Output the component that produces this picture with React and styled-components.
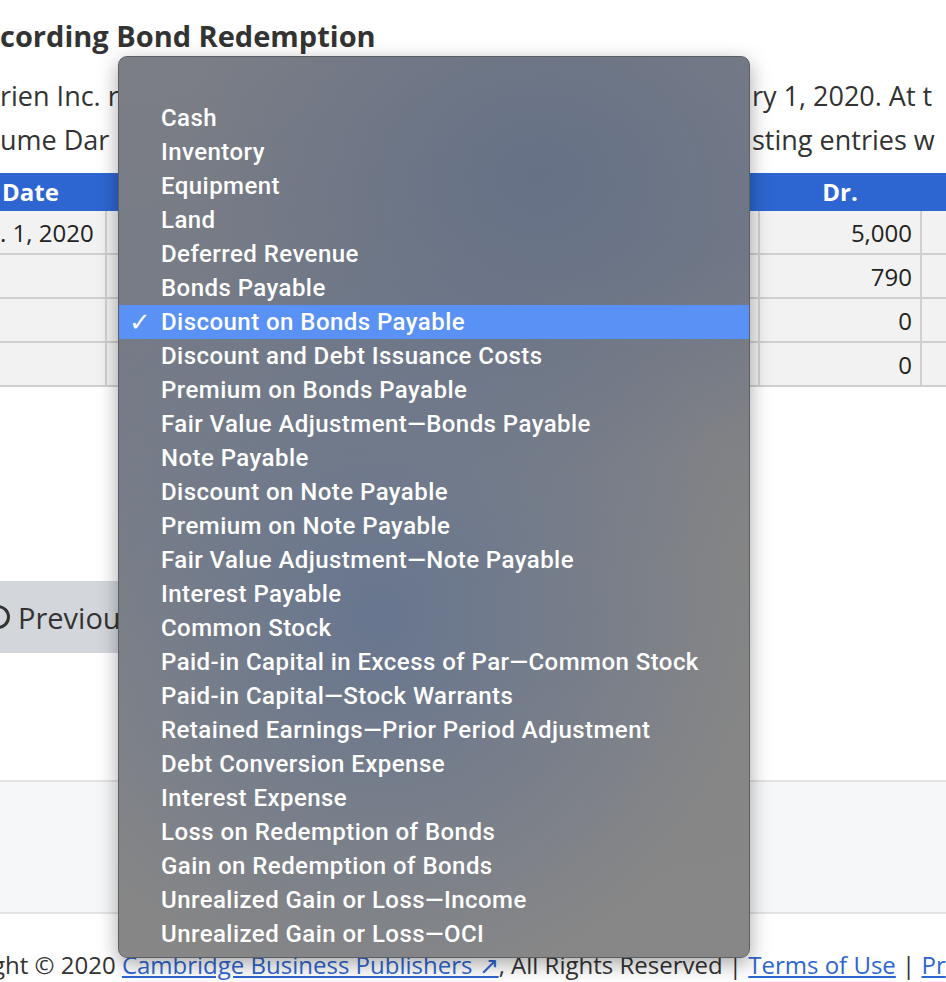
import React from "react";
import styled, { createGlobalStyle } from "styled-components";

const Global = createGlobalStyle`
  html, body { margin: 0; padding: 0; background: #fff; overflow: hidden; }
  body { font-family: "Open Sans", "Liberation Sans", sans-serif; color: #333; }
`;

const Page = styled.div`
  position: relative;
  width: 946px;
  height: 982px;
  overflow: hidden;
`;
const Main = styled.div`
  padding-top: 14px;
`;
const Title = styled.h2`
  margin: 0;
  font-size: 29px;
  font-weight: 700;
  line-height: 44px;
  color: #333;
  white-space: nowrap;
`;
const Para = styled.div`
  margin-top: 16px;
  font-size: 27px;
  line-height: 44px;
  color: #333;
`;
const Line = styled.div`
  display: flex;
  white-space: nowrap;
  overflow: hidden;
`;
const Left = styled.span`width: 752px; flex: none;`;
const Table = styled.div`
  margin-top: 11px;
  display: grid;
  grid-template-columns: 105px 653px 162px 26px;
`;
const Head = styled.div`
  background: #2e66d1;
  color: #fff;
  font-weight: 700;
  font-size: 24px;
  height: 38px;
  line-height: 38px;
  text-align: ${p => p.$align || "left"};
  padding-left: 2px;
`;
const Cell = styled.div`
  height: 44px;
  line-height: 44px;
  background: #f2f2f2;
  border-bottom: 2px solid #cfcfcf;
  border-left: ${p => (p.$first ? "none" : "2px solid #d0d0d0")};
  font-size: 24px;
  color: #222;
  text-align: ${p => p.$align || "left"};
  padding-right: ${p => (p.$align === "right" ? "8px" : "0")};
  white-space: nowrap;
  overflow: hidden;
  box-sizing: border-box;
`;
const Nav = styled.div`
  margin-top: 194px;
  width: 134px;
  height: 72px;
  background: #d3d7db;
  display: flex;
  align-items: center;
  font-size: 29px;
  color: #333;
  gap: 8px;
  margin-left: -14px;
  white-space: nowrap;
  overflow: hidden;
`;
const Dot = styled.span`
  width: 24px; height: 24px; border-radius: 50%; border: 3px solid #333; box-sizing: border-box; flex: none;
`;
const Gray = styled.div`
  margin-top: 127px;
  height: 130px;
  background: #f6f7f8;
  border-top: 2px solid #e2e3e5;
  border-bottom: 2px solid #e2e3e5;
`;
const Footer = styled.div`
  padding-top: 34px;
  font-size: 24px;
  white-space: nowrap;
  color: #333;
  margin-left: -8px;
  a { color: #2e66d1; text-decoration: underline; }
`;
const Menu = styled.div`
  position: absolute;
  left: 118px;
  top: 56px;
  width: 632px;
  height: 902px;
  box-sizing: border-box;
  border-radius: 9px;
  border: 1px solid #5b5e63;
  background: radial-gradient(ellipse 380px 380px at 260px 560px, rgba(100,116,144,0.9) 0%, rgba(130,130,130,0) 100%),
    radial-gradient(ellipse 360px 300px at 420px 120px, rgba(100,112,135,0.9) 0%, rgba(130,130,130,0) 100%),
    linear-gradient(170deg, #7b7e85 0%, #767b86 30%, #858585 60%, #878787 100%);
  box-shadow: 0 6px 20px rgba(0,0,0,0.35);
  padding-top: 44px;
  font-family: Roboto, "Liberation Sans", sans-serif;
`;
const Item = styled.div`
  height: 34px;
  line-height: 34px;
  font-size: 24px;
  letter-spacing: 0.45px;
  font-weight: 500;
  color: #fff;
  padding-left: 42px;
  position: relative;
  background: ${p => (p.$sel ? "#5a91f5" : "transparent")};
  white-space: nowrap;
`;
const Check = styled.span`
  position: absolute;
  left: 10px;
  font-size: 26px;
`;

const items = ["Cash","Inventory","Equipment","Land","Deferred Revenue","Bonds Payable","Discount on Bonds Payable","Discount and Debt Issuance Costs","Premium on Bonds Payable","Fair Value Adjustment—Bonds Payable","Note Payable","Discount on Note Payable","Premium on Note Payable","Fair Value Adjustment—Note Payable","Interest Payable","Common Stock","Paid-in Capital in Excess of Par—Common Stock","Paid-in Capital—Stock Warrants","Retained Earnings—Prior Period Adjustment","Debt Conversion Expense","Interest Expense","Loss on Redemption of Bonds","Gain on Redemption of Bonds","Unrealized Gain or Loss—Income","Unrealized Gain or Loss—OCI"];

const rows = [[". 1, 2020","5,000"],["","790"],["","0"],["","0"]];

export default function App() {
  return (
    <Page>
      <Global />
      <Main>
        <Title>cording Bond Redemption</Title>
        <Para>
          <Line><Left>rien Inc. r</Left><span>ry 1, 2020. At t</span></Line>
          <Line><Left>ume Dar</Left><span>sting entries w</span></Line>
        </Para>
        <Table>
          <Head>Date</Head><Head /><Head $align="center">Dr.</Head><Head />
          {rows.map((r, i) => (
            <React.Fragment key={i}>
              <Cell $first>{r[0]}</Cell>
              <Cell />
              <Cell $align="right">{r[1]}</Cell>
              <Cell />
            </React.Fragment>
          ))}
        </Table>
        <Nav><Dot />Previous</Nav>
        <Gray />
        <Footer>ght © 2020 <a>Cambridge Business Publishers ↗</a>, All Rights Reserved | <a>Terms of Use</a> | <a>Pr</a></Footer>
      </Main>
      <Menu>
        {items.map(t => (
          <Item key={t} $sel={t === "Discount on Bonds Payable"}>
            {t === "Discount on Bonds Payable" && <Check>✓</Check>}
            {t}
          </Item>
        ))}
      </Menu>
    </Page>
  );
}
